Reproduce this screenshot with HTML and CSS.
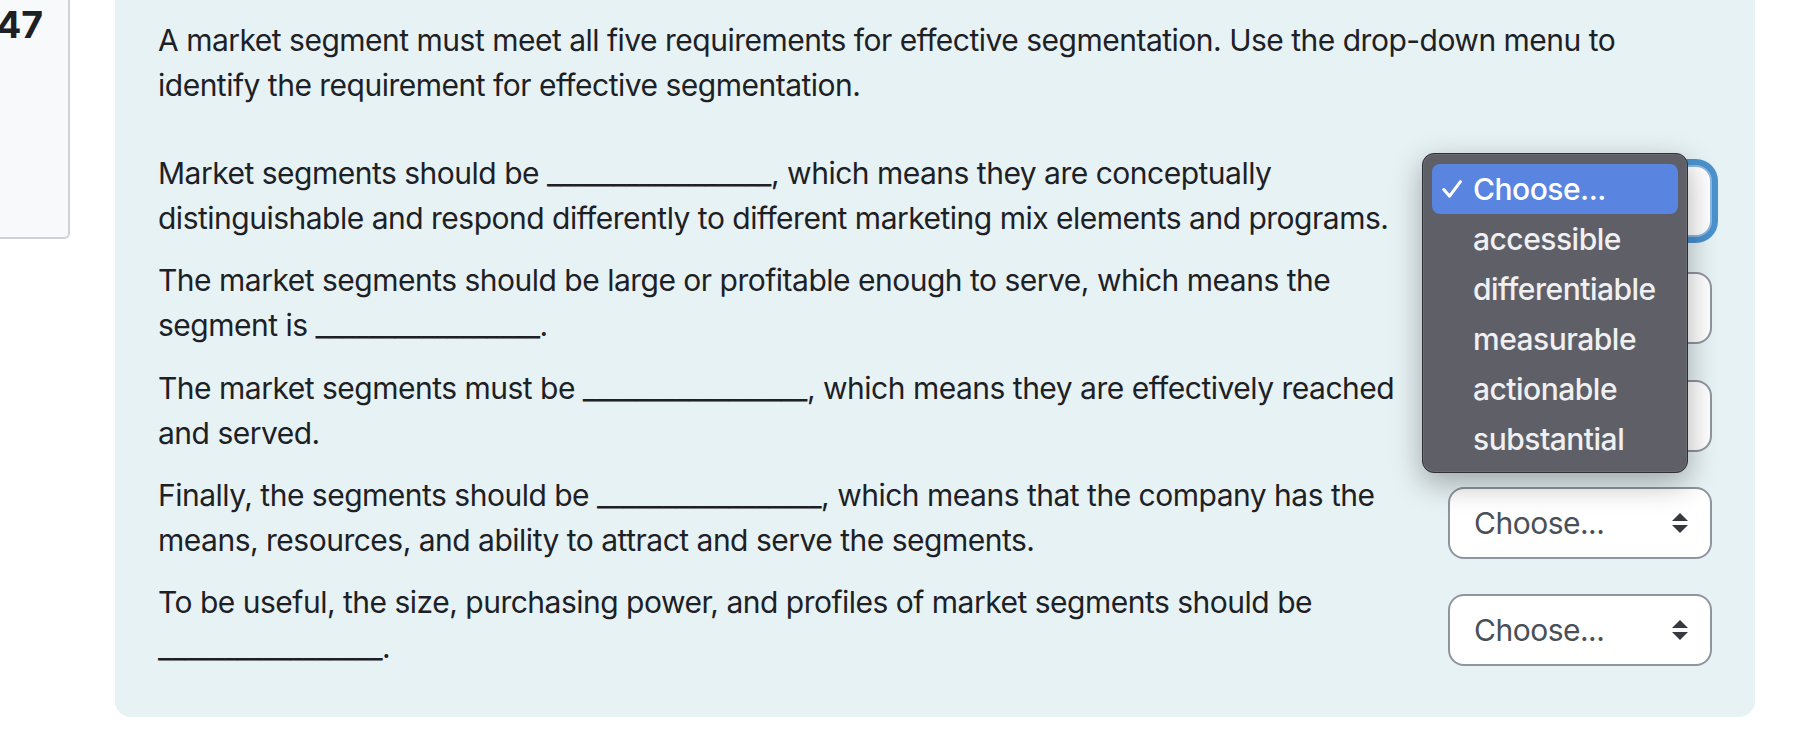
FILE: index.html
```html
<!DOCTYPE html>
<html lang="en">
<head>
<meta charset="utf-8">
<title>Question 47</title>
<link rel="stylesheet" href="styles.css">
</head>
<body>
<div class="page">
  <div class="info"><span class="qno">47</span></div>
  <div class="formulation">
    <p class="qtext">A market segment must meet all five requirements for effective segmentation. Use the drop-down menu to identify the requirement for effective segmentation.</p>
    <div class="answer">
      <div class="text">Market segments should be _________________, which means they are conceptually distinguishable and respond differently to different marketing mix elements and programs.</div>
      <div class="control">
        <div class="select focused">
          <span>Choose...</span>
          <svg class="arrow" width="16" height="20" viewBox="0 0 4 5"><path d="M2 0L0 2h4zm0 5L0 3h4z"/></svg>
        </div>
        <div class="menu">
          <div class="item selected">
            <span class="check"><svg width="20" height="18" viewBox="0 0 20 18"><path d="M1.8 9.6 L7.6 16.2 L18.4 1.6" fill="none" stroke="#fff" stroke-width="3" stroke-linecap="round" stroke-linejoin="round"/></svg></span>Choose...
          </div>
          <div class="item"><span class="check"></span>accessible</div>
          <div class="item"><span class="check"></span>differentiable</div>
          <div class="item"><span class="check"></span>measurable</div>
          <div class="item"><span class="check"></span>actionable</div>
          <div class="item"><span class="check"></span>substantial</div>
        </div>
      </div>

      <div class="text">The market segments should be large or profitable enough to serve, which means the segment is _________________.</div>
      <div class="control">
        <div class="select">
          <span>Choose...</span>
          <svg class="arrow" width="16" height="20" viewBox="0 0 4 5"><path d="M2 0L0 2h4zm0 5L0 3h4z"/></svg>
        </div>
      </div>

      <div class="text">The market segments must be _________________, which means they are effectively reached and served.</div>
      <div class="control">
        <div class="select">
          <span>Choose...</span>
          <svg class="arrow" width="16" height="20" viewBox="0 0 4 5"><path d="M2 0L0 2h4zm0 5L0 3h4z"/></svg>
        </div>
      </div>

      <div class="text">Finally, the segments should be _________________, which means that the company has the means, resources, and ability to attract and serve the segments.</div>
      <div class="control">
        <div class="select">
          <span>Choose...</span>
          <svg class="arrow" width="16" height="20" viewBox="0 0 4 5"><path d="M2 0L0 2h4zm0 5L0 3h4z"/></svg>
        </div>
      </div>

      <div class="text">To be useful, the size, purchasing power, and profiles of market segments should be _________________.</div>
      <div class="control">
        <div class="select">
          <span>Choose...</span>
          <svg class="arrow" width="16" height="20" viewBox="0 0 4 5"><path d="M2 0L0 2h4zm0 5L0 3h4z"/></svg>
        </div>
      </div>
    </div>
  </div>
</div>
</body>
</html>
```

FILE: styles.css
```css
html, body {
  margin: 0;
  padding: 0;
  background: #ffffff;
}

body {
  font-family: Inter, "Noto Sans", "Liberation Sans", sans-serif;
  color: #1d2125;
  letter-spacing: -0.5px;
}

.page {
  display: flex;
  align-items: flex-start;
  width: 1798px;
  height: 740px;
  overflow: hidden;
}

.info {
  flex: 0 0 70px;
  width: 70px;
  height: 239px;
  box-sizing: border-box;
  background: #f8f9fa;
  border-right: 2px solid #cfd3d8;
  border-bottom: 2px solid #cfd3d8;
  border-bottom-right-radius: 6px;
  padding-top: 2px;
  overflow: hidden;
}

.qno {
  display: block;
  margin-left: -4px;
  font-size: 37.5px;
  font-weight: 700;
  line-height: 45px;
  letter-spacing: 0;
  white-space: nowrap;
}

.formulation {
  flex: 0 0 1640px;
  width: 1640px;
  margin-left: 45px;
  box-sizing: border-box;
  background: #e7f2f5;
  border-radius: 0 0 16px 16px;
  padding: 18px 35px 47px 43px;
}

.qtext {
  margin: 0 0 43px 0;
  font-size: 30px;
  line-height: 45px;
}

.answer {
  display: grid;
  grid-template-columns: 1260px 264px;
  column-gap: 30px;
  row-gap: 17.25px;
  font-size: 30px;
  line-height: 45px;
}

.text {
  min-height: 90px;
}

.control {
  position: relative;
  padding-top: 14px;
}

.select {
  height: 72px;
  box-sizing: border-box;
  border: 2px solid #8f959e;
  border-radius: 16px;
  background: #ffffff;
  display: flex;
  align-items: center;
  justify-content: space-between;
  padding: 0 22px 0 24px;
  color: #495057;
  line-height: normal;
}

.select.focused {
  border-color: #8db7e2;
  box-shadow: 0 0 0 6px rgba(15, 108, 191, 0.72);
}

.arrow {
  display: block;
  fill: #343a40;
}

.menu {
  position: absolute;
  left: -26px;
  top: 2px;
  width: 266px;
  height: 320px;
  box-sizing: border-box;
  padding: 10px 9px;
  background: #5f6067;
  border: 1px solid #2f3034;
  border-radius: 12px;
  box-shadow: 0 10px 30px rgba(0, 0, 0, 0.32), inset 0 0 0 1px rgba(255, 255, 255, 0.08);
  z-index: 5;
}

.item {
  display: flex;
  align-items: center;
  height: 50px;
  padding-left: 10px;
  border-radius: 8px;
  color: #f0f0f2;
  font-size: 30px;
  font-weight: 500;
  line-height: 50px;
  letter-spacing: -0.5px;
  white-space: nowrap;
}

.item.selected {
  background: #5985e1;
  color: #ffffff;
}

.check {
  display: flex;
  align-items: center;
  width: 31px;
  flex: 0 0 31px;
}

.check svg {
  display: block;
}
```
